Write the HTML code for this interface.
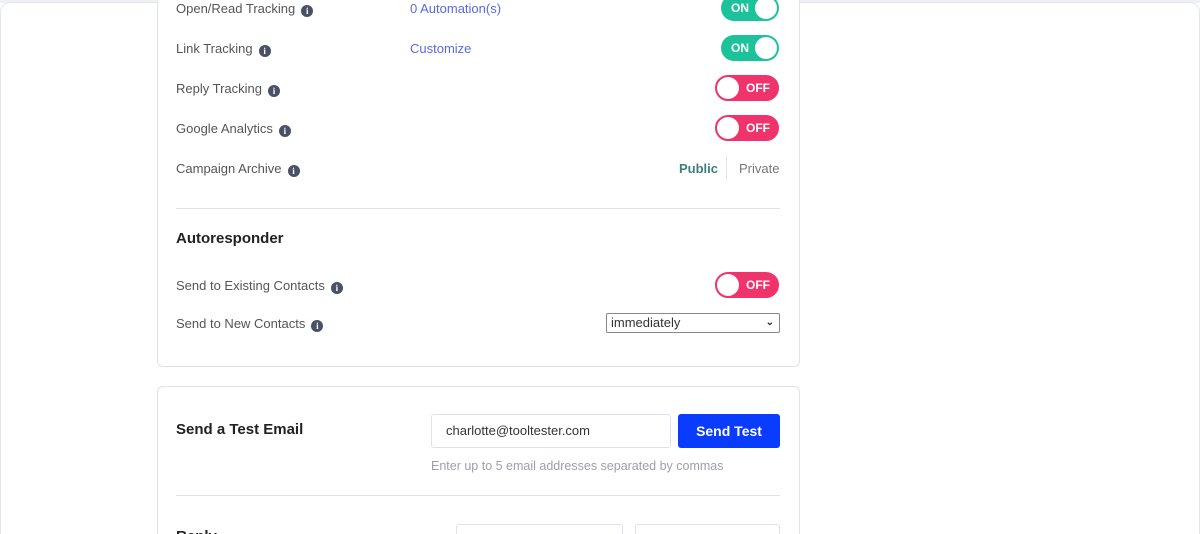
<!DOCTYPE html>
<html style="height:534px;overflow:hidden"><head><style>
*{box-sizing:border-box;margin:0;padding:0}
body{width:1200px;height:534px;overflow:hidden;background:#fff;font-family:"Liberation Sans",sans-serif;position:relative}
.top{position:absolute;left:0;top:0;width:1200px;height:3px;background:#eef0f4}
.frame{position:absolute;left:0;top:2px;width:1200px;height:532px;border:1px solid #e4e6ee;border-radius:10px 10px 0 0;border-bottom:none}
.card{position:absolute;left:157px;width:643px;border:1px solid #dfe2ea;border-radius:6px;background:#fff}
.t{position:absolute;font-size:13px;color:#555;line-height:16px;white-space:nowrap}
.i{display:inline-block;width:12px;height:12px;border-radius:50%;background:#4a5066;color:#fff;font-size:9px;font-weight:bold;text-align:center;line-height:12px;margin-left:6px;vertical-align:-1px;font-family:"Liberation Serif",serif}
.lnk{color:#5968e6}
.h{position:absolute;font-size:15px;font-weight:bold;color:#222;white-space:nowrap}
.tg{position:absolute;left:715px;width:64px;height:26px;border-radius:13px;color:#fff;font-size:12px;font-weight:bold;line-height:26px}
.on{background:#1cc39a;padding-left:10px;left:721px;width:58px}
.on:after{content:"";position:absolute;right:2px;top:2px;width:22px;height:22px;border-radius:50%;background:#fff}
.off{background:#f0336a;padding-left:29px;border:2px solid #f0336a;line-height:22px}
.off:after{content:"";position:absolute;left:0;top:0;width:22px;height:22px;border-radius:50%;background:#fff}
.hr{position:absolute;left:176px;width:604px;height:1px;background:#dfe2ea}
</style></head><body>
<div class="top"></div><div class="frame"></div>
<div class="card" style="top:0;height:367px;border-top:none;border-radius:0 0 6px 6px"></div>
<div class="card" style="top:386px;height:148px;border-bottom:none;border-radius:6px 6px 0 0"></div>

<div class="t" style="left:176px;top:1px">Open/Read Tracking<span class="i">i</span></div>
<div class="t lnk" style="left:410px;top:1px">0 Automation(s)</div>
<div class="tg on" style="top:-5px">ON</div>

<div class="t" style="left:176px;top:41px">Link Tracking<span class="i">i</span></div>
<div class="t lnk" style="left:410px;top:41px">Customize</div>
<div class="tg on" style="top:35px">ON</div>

<div class="t" style="left:176px;top:81px">Reply Tracking<span class="i">i</span></div>
<div class="tg off" style="top:75px">OFF</div>

<div class="t" style="left:176px;top:121px">Google Analytics<span class="i">i</span></div>
<div class="tg off" style="top:115px">OFF</div>

<div class="t" style="left:176px;top:161px">Campaign Archive<span class="i">i</span></div>
<div class="t" style="left:679px;top:161px;color:#3f7f7a;font-weight:bold">Public</div>
<div style="position:absolute;left:726px;top:156px;width:1px;height:24px;background:#e2e4ea"></div>
<div class="t" style="left:739px;top:161px;color:#777">Private</div>

<div class="hr" style="top:208px"></div>
<div class="h" style="left:176px;top:230px">Autoresponder</div>

<div class="t" style="left:176px;top:278px">Send to Existing Contacts<span class="i">i</span></div>
<div class="tg off" style="top:272px">OFF</div>
<div class="t" style="left:176px;top:316px">Send to New Contacts<span class="i">i</span></div>
<div style="position:absolute;left:606px;top:313px;width:174px;height:20px;border:1px solid #888;border-radius:2px;font-size:13px;color:#333;padding-left:4px;line-height:18px">immediately<span style="position:absolute;right:5px;top:0;font-size:10px;font-weight:bold">&#8964;</span></div>

<div class="h" style="left:176px;top:421px">Send a Test Email</div>
<div style="position:absolute;left:431px;top:414px;width:240px;height:34px;border:1px solid #dfe2ea;border-radius:3px;font-size:13px;color:#333;padding-left:14px;line-height:32px">charlotte@tooltester.com</div>
<div style="position:absolute;left:678px;top:414px;width:102px;height:34px;background:#0a3cff;border-radius:3px;color:#fff;font-size:14px;font-weight:bold;text-align:center;line-height:34px">Send Test</div>
<div class="t" style="left:431px;top:458px;color:#9aa0ad;font-size:12.5px">Enter up to 5 email addresses separated by commas</div>
<div class="hr" style="top:495px"></div>
<div style="position:absolute;left:176px;top:528px;height:6px;overflow:hidden;font-size:15px;font-weight:bold;color:#222;line-height:18px">Reply</div>
<div style="position:absolute;left:456px;top:524px;width:167px;height:10px;border:1px solid #dfe2ea;border-bottom:none;border-radius:3px 3px 0 0"></div>
<div style="position:absolute;left:635px;top:524px;width:145px;height:10px;border:1px solid #dfe2ea;border-bottom:none;border-radius:3px 3px 0 0"></div>
</body></html>
